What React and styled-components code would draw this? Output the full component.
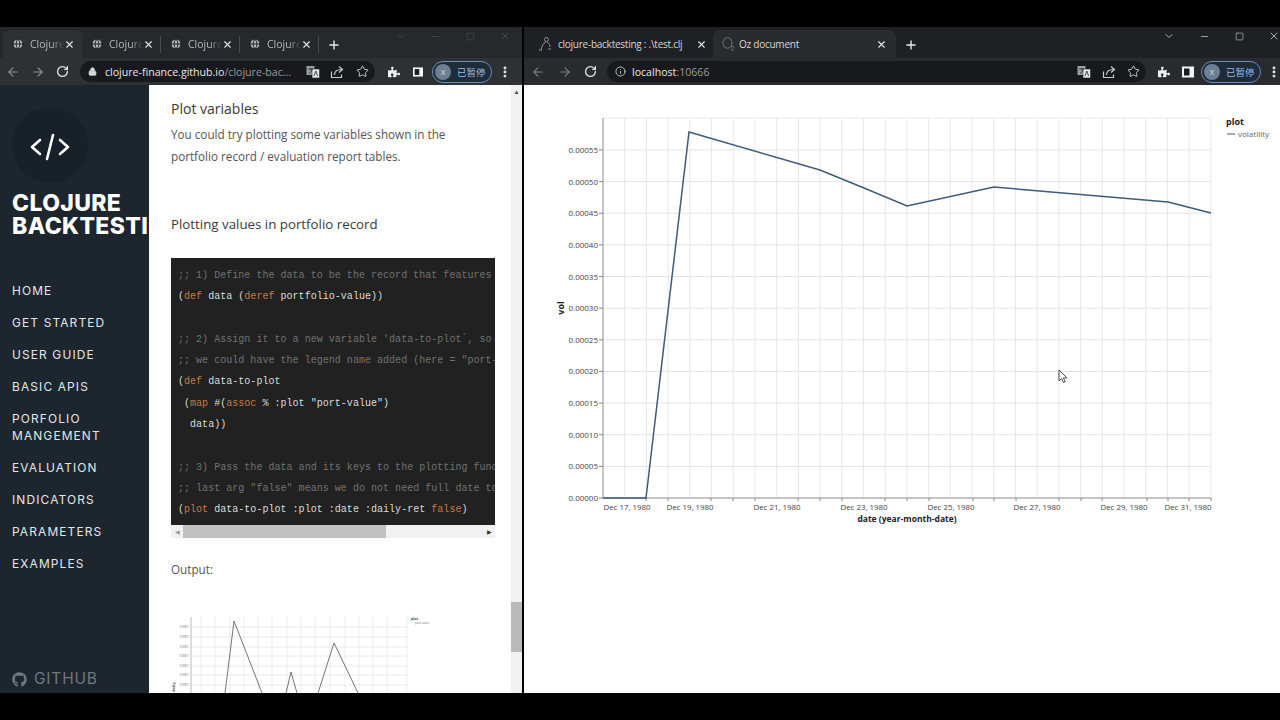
import React from "react";
import styled, { createGlobalStyle } from "styled-components";
import { ArrowLeft, ArrowRight, RotateCw, Lock, Star, X, Plus, Info, ChevronDown, Minus, Square, MoreVertical, Globe } from "lucide-react";
import { FaGithub, FaPuzzlePiece } from "react-icons/fa";

const Global = createGlobalStyle`
  html, body { margin: 0; padding: 0; background: #000; }
  * { box-sizing: border-box; }
`;

const Frame = styled.div`
  position: relative;
  width: 1280px;
  height: 720px;
  padding: 27px 0;
  background: #000;
  display: flex;
  gap: 2px;
  overflow: hidden;
  font-family: "Open Sans", "Noto Sans", sans-serif;
`;
const Window = styled.section`
  width: ${(p) => p.$w}px;
  display: flex;
  flex-direction: column;
  flex: none;
`;
const TabStrip = styled.div`
  height: 31px;
  flex: none;
  display: flex;
  align-items: flex-end;
  padding-left: ${(p) => p.$pad}px;
  background: ${(p) => p.$bg};
`;
const Tab = styled.div`
  width: ${(p) => p.$w}px;
  height: 28px;
  flex: none;
  display: flex;
  align-items: center;
  padding-left: ${(p) => p.$pad}px;
  background: ${(p) => p.$active || "transparent"};
  border-radius: 7px 7px 0 0;
  color: ${(p) => p.$color || "#b4b6b8"};
  font-size: ${(p) => p.$size || 10.5}px;
`;
const TabSep = styled.span`
  width: 1px;
  height: 17px;
  margin-bottom: 5px;
  background: #4a4d50;
  flex: none;
  margin-left: -1px;
`;
const TabTitle = styled.span`
  width: ${(p) => p.$w}px;
  margin-left: ${(p) => p.$ml}px;
  overflow: hidden;
  white-space: nowrap;
  flex: none;
  ${(p) => p.$fade && "mask-image: linear-gradient(90deg, #000 65%, transparent 100%);"}
`;
const CondensedTitle = styled(TabTitle)`
  letter-spacing: -0.25px;
`;
const TabClose = styled.span`
  display: flex;
  flex: none;
  color: #e4e5e6;
`;
const NewTab = styled.span`
  display: flex;
  margin: 0 0 6px ${(p) => p.$ml}px;
  color: #e8e8e8;
`;
const Controls = styled.div`
  margin-left: auto;
  align-self: flex-start;
  display: flex;
  align-items: center;
  gap: 23px;
  height: 18px;
  padding-right: ${(p) => p.$pr}px;
  color: ${(p) => p.$color};
`;
const Control = styled.span`
  display: flex;
  justify-content: center;
  width: 12px;
`;
const Toolbar = styled.div`
  height: 27px;
  flex: none;
  display: flex;
  align-items: center;
  background: ${(p) => p.$bg};
`;
const NavButton = styled.span`
  display: flex;
  justify-content: center;
  flex: none;
  width: ${(p) => p.$w}px;
  color: ${(p) => p.$color || "#8e9194"};
`;
const Omnibox = styled.div`
  height: 21px;
  flex: none;
  width: ${(p) => p.$w}px;
  margin-left: ${(p) => p.$ml}px;
  display: flex;
  align-items: center;
  background: #17191c;
  border-radius: 11px;
  padding-left: ${(p) => p.$pad}px;
  font-size: 10.6px;
  color: #9a9c9f;
`;
const Host = styled.b`
  color: #e9eaeb;
  font-weight: 500;
`;
const UrlText = styled.span`
  margin-left: ${(p) => p.$ml}px;
  white-space: nowrap;
  flex: none;
`;
const OmniActions = styled.span`
  margin-left: auto;
  display: flex;
  align-items: center;
  color: #c9cacc;
`;
const ActionSlot = styled.span`
  display: flex;
  justify-content: center;
  flex: none;
  width: ${(p) => p.$w}px;
`;
const Profile = styled.div`
  width: 60px;
  height: 22px;
  flex: none;
  margin-left: ${(p) => p.$ml}px;
  display: flex;
  align-items: center;
  padding-left: 2px;
  gap: 6px;
  border: 1px solid #6f8db0;
  border-radius: 11px;
  background: #1e2b3a;
  color: #9dbbe0;
  font-size: 9.5px;
  font-family: "Noto Sans CJK SC", sans-serif;
`;
const Avatar = styled.span`
  width: 16px;
  height: 16px;
  border-radius: 50%;
  background: #6d7f92;
  color: #dfe4e9;
  display: flex;
  align-items: center;
  justify-content: center;
  font-size: 8px;
  font-family: "Open Sans", sans-serif;
`;
const Body = styled.div`
  flex: 1;
  min-height: 0;
  display: flex;
  overflow: hidden;
  background: #fff;
`;
const Sidebar = styled.aside`
  width: 149px;
  flex: none;
  display: flex;
  flex-direction: column;
  padding: 22px 0 4px 12px;
  background: #1d262e;
  overflow: hidden;
`;
const LogoCircle = styled.div`
  width: 76px;
  height: 76px;
  flex: none;
  padding-top: 3px;
  border-radius: 50%;
  background: #182029;
  display: flex;
  align-items: center;
  justify-content: center;
`;
const Brand = styled.h1`
  margin: 9px 0 0;
  font: 800 23px/23px Inter, sans-serif;
  letter-spacing: 0.35px;
  color: #fff;
  white-space: nowrap;
`;
const Nav = styled.nav`
  margin-top: 36px;
  display: flex;
  flex-direction: column;
`;
const NavItem = styled.a`
  padding: 7.5px 0;
  font: 400 11.9px/17px Inter, sans-serif;
  letter-spacing: 1.15px;
  color: #e3e6e8;
`;
const GithubLink = styled.a`
  margin-top: auto;
  display: flex;
  align-items: center;
  gap: 7px;
  font: 400 15.5px/20px Inter, sans-serif;
  letter-spacing: 0.8px;
  color: #6f787f;
`;
const Main = styled.main`
  flex: 1;
  min-width: 0;
  padding: 14px 16px 0 22px;
  overflow: hidden;
  color: #444;
`;
const H3 = styled.h3`
  margin: 0;
  font-weight: 400;
  font-size: 14px;
  line-height: 20px;
  color: #3a3a3a;
`;
const Para = styled.p`
  margin: 5px 0 0;
  font-size: 11.7px;
  line-height: 21.5px;
  color: #555;
`;
const SectionHead = styled(H3)`
  margin-top: 47px;
  font-size: 13.3px;
`;
const CodeBlock = styled.pre`
  margin: 24px 0 0;
  height: 267px;
  padding: 7px 0 0 7px;
  background: #212121;
  overflow: hidden;
  font: 10px/21.3px "Liberation Mono", monospace;
  letter-spacing: 0.03px;
  color: #dcdcdc;
`;
const Comment = styled.span`
  color: #727272;
`;
const Kw = styled.span`
  color: #c97a45;
`;
const HScroll = styled.div`
  height: 13px;
  display: flex;
  align-items: center;
  background: #f1f1f1;
  font-size: 6px;
`;
const HArrow = styled.span`
  width: 12px;
  flex: none;
  text-align: center;
  color: ${(p) => p.$color};
  ${(p) => p.$end && "margin-left: auto;"}
`;
const HThumb = styled.span`
  width: 203px;
  height: 100%;
  background: #c1c1c1;
  flex: none;
`;
const OutputLabel = styled.p`
  margin: 21px 0 0;
  font-size: 11.7px;
  line-height: 20px;
  color: #555;
`;
const MiniChart = styled.svg`
  display: block;
  margin-top: 38px;
  width: 270px;
  height: 76px;
`;
const VScroll = styled.div`
  width: 11px;
  flex: none;
  display: flex;
  flex-direction: column;
  background: #f1f1f1;
`;
const VArrow = styled.span`
  height: 14px;
  text-align: center;
  font-size: 6px;
  line-height: 14px;
  color: #444;
`;
const VThumb = styled.span`
  height: 50px;
  margin-top: 503px;
  background: #b9b9b9;
`;
const ChartSvg = styled.svg`
  display: block;
  width: 756px;
  height: 608px;
  font-family: "Open Sans", sans-serif;
`;
const Cursor = styled.svg`
  position: absolute;
  left: 1058px;
  top: 369px;
`;

const Puzzle = () => <FaPuzzlePiece size={12} color="#f0f0f0" />;

const Translate = () => (
  <svg width="14" height="14" viewBox="0 0 14 14">
    <rect x="0.5" y="1" width="8" height="9" fill="#9b9da0" />
    <rect x="6" y="4" width="7.5" height="9" fill="#e6e6e6" stroke="#222" strokeWidth="0.6" />
    <path d="M8 11l1.8-5 1.8 5" fill="none" stroke="#333" strokeWidth="0.9" />
    <path d="M2 4h5M4.5 3v1M3 8.5c1.5-1 2.5-2.5 2.8-4.5" fill="none" stroke="#222" strokeWidth="0.8" />
  </svg>
);
const ShareIcon = () => (
  <svg width="14" height="14" viewBox="0 0 14 14" fill="none" stroke="#c9cacc" strokeWidth="1.2">
    <path d="M1.5 6.5v6h10v-3" />
    <path d="M4.5 10c0-3.5 2.5-5.5 7-5.5M9 1.5l3.5 3-3.5 3" />
  </svg>
);
const PanelIcon = () => (
  <svg width="12" height="12" viewBox="0 0 12 12">
    <rect x="0" y="0.5" width="12" height="11" fill="#f4f4f4" />
    <rect x="2" y="2.5" width="5.5" height="7" fill="#1b1c1f" />
  </svg>
);
const CodeGlyph = () => (
  <svg width="40" height="28" viewBox="0 0 40 28" fill="none" stroke="#fff" strokeWidth="2.6" strokeLinecap="round" strokeLinejoin="round">
    <path d="M10 7L2 14l8 7M30 7l8 7-8 7M23 2l-6 24" />
  </svg>
);
const FigureIcon = () => (
  <svg width="15" height="16" viewBox="0 0 15 16" fill="none" stroke="#8f9295" strokeWidth="1">
    <circle cx="8.5" cy="3.5" r="2" />
    <path d="M8 6c-3 1-4 4-5 8M9 6c2 1 3 3 3 5M1 14h3M10 13h3" />
  </svg>
);
const OzIcon = () => (
  <svg width="13" height="14" viewBox="0 0 13 14" fill="none" stroke="#6b6d70" strokeWidth="1.1">
    <ellipse cx="5.5" cy="6" rx="4.5" ry="5.3" />
    <path d="M9 9.5h3l-3 3.5h3" strokeWidth="0.8" />
  </svg>
);
const KebabIcon = () => <MoreVertical size={14} strokeWidth={3} color="#e8e8e8" />;

const leftTabs = [0, 1, 2, 3];

const Win1Toolbar = () => (
  <Toolbar $bg="#2e3134">
    <NavButton $w={26}><ArrowLeft size={14} /></NavButton>
    <NavButton $w={24}><ArrowRight size={14} /></NavButton>
    <NavButton $w={24} $color="#e5e6e7"><RotateCw size={13} strokeWidth={2.4} /></NavButton>
    <Omnibox $w={295} $ml={6} $pad={8}>
      <Lock size={9} color="#d8d8d8" fill="#d8d8d8" />
      <UrlText $ml={8}><Host>clojure-finance.github.io</Host>/clojure-bac...</UrlText>
      <OmniActions>
        <ActionSlot $w={24}><Translate /></ActionSlot>
        <ActionSlot $w={24}><ShareIcon /></ActionSlot>
        <ActionSlot $w={26}><Star size={13} strokeWidth={1.8} /></ActionSlot>
      </OmniActions>
    </Omnibox>
    <NavButton $w={38}><Puzzle /></NavButton>
    <NavButton $w={10}><PanelIcon /></NavButton>
    <Profile $ml={9}><Avatar>X</Avatar>已暂停</Profile>
    <NavButton $w={26}><KebabIcon /></NavButton>
  </Toolbar>
);

const Win2Toolbar = () => (
  <Toolbar $bg="#2a2b2f">
    <NavButton $w={28}><ArrowLeft size={14} color="#7d7f83" /></NavButton>
    <NavButton $w={26}><ArrowRight size={14} color="#7d7f83" /></NavButton>
    <NavButton $w={25} $color="#e5e6e7"><RotateCw size={13} strokeWidth={2.4} /></NavButton>
    <Omnibox $w={539} $ml={4} $pad={8}>
      <Info size={11} color="#c9cacc" />
      <UrlText $ml={6}><Host>localhost</Host>:10666</UrlText>
      <OmniActions>
        <ActionSlot $w={26}><Translate /></ActionSlot>
        <ActionSlot $w={24}><ShareIcon /></ActionSlot>
        <ActionSlot $w={25}><Star size={13} strokeWidth={1.8} /></ActionSlot>
      </OmniActions>
    </Omnibox>
    <NavButton $w={36}><Puzzle /></NavButton>
    <NavButton $w={12}><PanelIcon /></NavButton>
    <Profile $ml={7}><Avatar>X</Avatar>已暂停</Profile>
    <NavButton $w={26}><KebabIcon /></NavButton>
  </Toolbar>
);

const Code = () => (
  <CodeBlock>
    <Comment>;; 1) Define the data to be the record that features are stored</Comment>{"\n"}
    (<Kw>def</Kw> data (<Kw>deref</Kw> portfolio-value)){"\n"}
    {"\n"}
    <Comment>;; 2) Assign it to a new variable 'data-to-plot`, so that</Comment>{"\n"}
    <Comment>;; we could have the legend name added (here = "port-value")</Comment>{"\n"}
    (<Kw>def</Kw> data-to-plot{"\n"}
    {" "}(<Kw>map</Kw> #(<Kw>assoc</Kw> % :plot "port-value"){"\n"}
    {"  "}data)){"\n"}
    {"\n"}
    <Comment>;; 3) Pass the data and its keys to the plotting function</Comment>{"\n"}
    <Comment>;; last arg "false" means we do not need full date to show</Comment>{"\n"}
    (<Kw>plot</Kw> data-to-plot :plot :date :daily-ret <Kw>false</Kw>)
  </CodeBlock>
);

const miniV = [201, 215, 230, 244, 258, 272, 287, 301, 315, 330, 345, 359, 373, 387, 407];
const miniH = [627, 637, 647, 656, 666, 675, 685];

const Mini = () => (
  <MiniChart viewBox="171 617 270 76">
    {miniV.map((x) => <line key={x} x1={x} x2={x} y1="617" y2="693" stroke="#e9e9e9" strokeWidth="0.8" />)}
    {miniH.map((y) => <line key={y} x1="191" x2="407" y1={y} y2={y} stroke="#e4e4e4" strokeWidth="0.8" />)}
    <line x1="191" x2="191" y1="617" y2="693" stroke="#aaa" strokeWidth="0.8" />
    {miniH.map((y) => <text key={y} x="189" y={y + 1} textAnchor="end" fontSize="3" fill="#666">0.0001</text>)}
    <polyline fill="none" stroke="#666" strokeWidth="0.9" points="225,693 234,621 262,693" />
    <polyline fill="none" stroke="#666" strokeWidth="0.9" points="286,693 291,672 297,693" />
    <polyline fill="none" stroke="#666" strokeWidth="0.9" points="318,693 334,643 358,693" />
    <text x="411" y="620" fontSize="3.5" fontWeight="700" fill="#444">plot</text>
    <text x="415" y="624" fontSize="3" fill="#777">port-value</text>
    <text x="175" y="692" fontSize="4" fontWeight="700" fill="#555" transform="rotate(-90 175 692)">daily</text>
  </MiniChart>
);

const gridX = Array.from({ length: 29 }, (_, i) => 603 + i * 21.71);
const gridY = Array.from({ length: 12 }, (_, i) => 498 - i * 31.64);
const yLabels = ["0.00000", "0.00005", "0.00010", "0.00015", "0.00020", "0.00025", "0.00030", "0.00035", "0.00040", "0.00045", "0.00050", "0.00055"];
const xLabels = [[627, "Dec 17, 1980"], [690, "Dec 19, 1980"], [777, "Dec 21, 1980"], [864, "Dec 23, 1980"], [951, "Dec 25, 1980"], [1037, "Dec 27, 1980"], [1124, "Dec 29, 1980"], [1188, "Dec 31, 1980"]];
const xTicks = [646, 668, 711, 733, 755, 798, 820, 842, 885, 907, 929, 973, 994, 1016, 1059, 1081, 1102, 1147, 1168, 1189, 1211];

const Chart = () => (
  <ChartSvg viewBox="524 85 756 608">
    {gridX.map((x) => <line key={x} x1={x} x2={x} y1="118" y2="498" stroke="#e8e8e8" />)}
    {gridY.map((y) => <line key={y} x1="603" x2="1211" y1={y} y2={y} stroke="#e4e4e4" />)}
    <line x1="603" x2="1211" y1="118" y2="118" stroke="#e8e8e8" />
    <line x1="603" x2="603" y1="118" y2="498" stroke="#999" />
    <line x1="603" x2="1211" y1="498" y2="498" stroke="#999" />
    {xTicks.map((x) => <line key={x} x1={x} x2={x} y1="498" y2="501" stroke="#888" />)}
    {gridY.map((y) => <line key={y} x1="599" x2="603" y1={y} y2={y} stroke="#888" />)}
    {gridY.map((y, i) => <text key={y} x="598" y={y + 3} textAnchor="end" fontSize="8" fill="#444">{yLabels[i]}</text>)}
    {xLabels.map(([x, t]) => <text key={t} x={x} y="510" textAnchor="middle" fontSize="7.9" fill="#444">{t}</text>)}
    <polyline fill="none" stroke="#3f5a7a" strokeWidth="1.5" points="603,498 646,498 689,132 820,170 864,188 907,206 994,187 1168,202 1211,213" />
    <text x="907" y="521.5" textAnchor="middle" fontSize="8.5" fontWeight="700" fill="#222">date (year-month-date)</text>
    <text x="564" y="308" textAnchor="middle" fontSize="9" fontWeight="700" fill="#222" transform="rotate(-90 564 308)">vol</text>
    <text x="1226" y="125" fontSize="9" fontWeight="700" fill="#222">plot</text>
    <line x1="1227" x2="1235" y1="134" y2="134" stroke="#5d7390" strokeWidth="1.2" />
    <text x="1238" y="137" fontSize="8" fill="#666">volatility</text>
  </ChartSvg>
);

export default function App() {
  return (
    <Frame>
      <Global />
      <Window $w={522}>
        <TabStrip $bg="#26292c" $pad={3}>
          {leftTabs.map((i) => (
            <React.Fragment key={i}>
              <Tab $w={79} $pad={9} $active={i === 0 ? "#2e3134" : undefined}>
                <Globe size={12} color="#1f2225" fill="#b8babc" />
                <TabTitle $w={34} $ml={6} $fade>Clojure</TabTitle>
                <TabClose><X size={11} strokeWidth={2.4} /></TabClose>
              </Tab>
              {i > 0 && <TabSep />}
            </React.Fragment>
          ))}
          <NewTab $ml={8}><Plus size={14} strokeWidth={2.4} /></NewTab>
          <Controls $color="#46494c" $pr={11}>
            <Control><ChevronDown size={11} /></Control>
            <Control><Minus size={11} /></Control>
            <Control><Square size={9} /></Control>
            <Control><X size={12} /></Control>
          </Controls>
        </TabStrip>
        <Win1Toolbar />
        <Body>
          <Sidebar>
            <LogoCircle><CodeGlyph /></LogoCircle>
            <Brand>CLOJURE<br />BACKTESTING</Brand>
            <Nav>
              <NavItem>HOME</NavItem>
              <NavItem>GET STARTED</NavItem>
              <NavItem>USER GUIDE</NavItem>
              <NavItem>BASIC APIS</NavItem>
              <NavItem>PORFOLIO<br />MANGEMENT</NavItem>
              <NavItem>EVALUATION</NavItem>
              <NavItem>INDICATORS</NavItem>
              <NavItem>PARAMETERS</NavItem>
              <NavItem>EXAMPLES</NavItem>
            </Nav>
            <GithubLink><FaGithub size={15} />GITHUB</GithubLink>
          </Sidebar>
          <Main>
            <H3>Plot variables</H3>
            <Para>You could try plotting some variables shown in the<br />portfolio record / evaluation report tables.</Para>
            <SectionHead>Plotting values in portfolio record</SectionHead>
            <Code />
            <HScroll>
              <HArrow $color="#999">◀</HArrow>
              <HThumb />
              <HArrow $end $color="#333">▶</HArrow>
            </HScroll>
            <OutputLabel>Output:</OutputLabel>
            <Mini />
          </Main>
          <VScroll>
            <VArrow>▲</VArrow>
            <VThumb />
          </VScroll>
        </Body>
      </Window>
      <Window $w={756}>
        <TabStrip $bg="#1f2023" $pad={0}>
          <Tab $w={189} $pad={14} $color="#d4d5d6" $size={10}>
            <FigureIcon />
            <CondensedTitle $w={138} $ml={5}>clojure-backtesting : .\test.clj</CondensedTitle>
            <TabClose><X size={11} strokeWidth={2.4} /></TabClose>
          </Tab>
          <Tab $w={183} $pad={9} $active="#2a2b2f" $color="#d4d5d6" $size={10}>
            <OzIcon />
            <CondensedTitle $w={137} $ml={4}>Oz document</CondensedTitle>
            <TabClose><X size={11} strokeWidth={2.4} /></TabClose>
          </Tab>
          <NewTab $ml={8}><Plus size={14} strokeWidth={2.4} /></NewTab>
          <Controls $color="#a9abad" $pr={0}>
            <Control><ChevronDown size={12} /></Control>
            <Control><Minus size={11} /></Control>
            <Control><Square size={9} /></Control>
            <Control><X size={12} /></Control>
          </Controls>
        </TabStrip>
        <Win2Toolbar />
        <Body>
          <Chart />
        </Body>
      </Window>
      <Cursor width="11" height="15" viewBox="0 0 11 15">
        <path d="M1 1v11l2.6-2.4 1.8 4 1.8-.8-1.8-3.9H9z" fill="#fff" stroke="#333" strokeWidth="0.9" />
      </Cursor>
    </Frame>
  );
}
